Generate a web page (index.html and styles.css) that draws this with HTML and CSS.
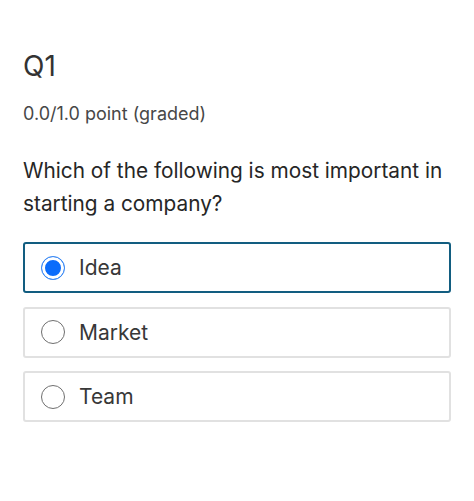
FILE: index.html
```html
<!DOCTYPE html>
<html lang="en">
<head>
    <meta charset="UTF-8">
    <meta name="viewport" content="width=device-width, initial-scale=1.0">
    <title>Q1</title>
    <link rel="stylesheet" href="styles.css">
</head>
<body>
    <div class="problem">
        <h2 class="title">Q1</h2>
        <p class="points">0.0/1.0 point (graded)</p>
        <p class="question">Which of the following is most important in starting a company?</p>

        <!-- answer choices -->
        <div class="choices">
            <label class="choice selected">
                <span class="radio"></span>
                <span class="choice-text">Idea</span>
            </label>
            <label class="choice">
                <span class="radio"></span>
                <span class="choice-text">Market</span>
            </label>
            <label class="choice">
                <span class="radio"></span>
                <span class="choice-text">Team</span>
            </label>
        </div>
    </div>
</body>
</html>
```

FILE: styles.css
```css
body {
    margin: 0;
    background: #fff;
    font-family: 'Inter', 'Liberation Sans', sans-serif;
    color: #313131;
}

.problem {
    padding: 49px 23px 0 23px;
}

.title {
    margin: 0;
    font-size: 28px;
    font-weight: 400;
    line-height: 34px;
    color: #333;
}

.points {
    margin: 18px 0 0 0;
    font-size: 18px;
    line-height: 25px;
    color: #474747;
}

.question {
    margin: 28px 0 0 0;
    font-size: 20.8px;
    line-height: 33px;
    color: #262626;
}

.choices {
    margin-top: 22px;
    display: flex;
    flex-direction: column;
    gap: 13.5px;
}

.choice {
    display: flex;
    align-items: center;
    gap: 14px;
    height: 51px;
    box-sizing: border-box;
    padding-left: 16px;
    border: 2px solid #e1e1e1;
    border-radius: 3px;
}

.choice.selected {
    border-color: #125d80;
}

.radio {
    width: 24px;
    height: 24px;
    box-sizing: border-box;
    border-radius: 50%;
    border: 1.5px solid #6f6f6f;
    background: #fff;
}

.choice.selected .radio {
    border: 1.5px solid #3d8bf2;
    background: #0b6cfb;
    box-shadow: inset 0 0 0 3px #fff;
}

.choice-text {
    font-size: 21px;
    color: #383838;
}
```
